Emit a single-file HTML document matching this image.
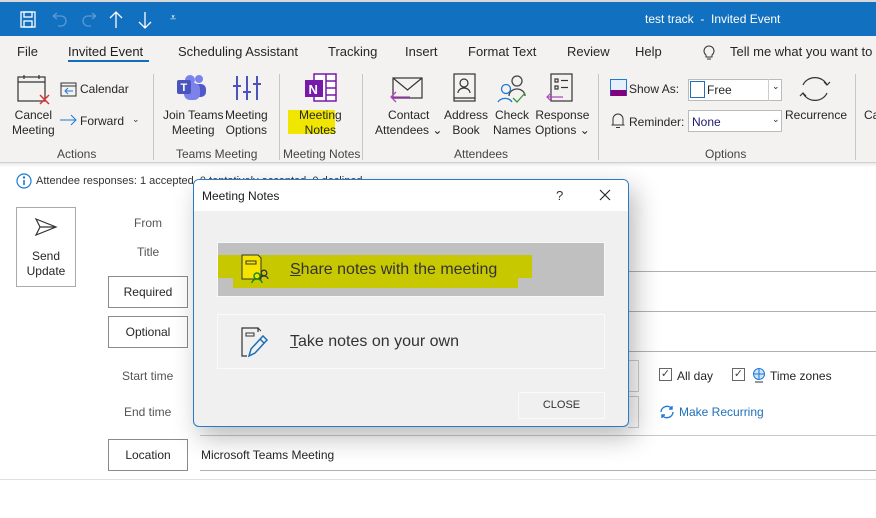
<!DOCTYPE html>
<html><head><meta charset="utf-8"><style>
*{margin:0;padding:0;box-sizing:border-box}
body{width:876px;height:518px;overflow:hidden;background:#fff;font-family:"Liberation Sans",sans-serif;color:#262626;position:relative}
.a{position:absolute;white-space:nowrap}
.t{font-size:12px;color:#262626}
.lbl{font-size:12px;color:#444}
.box{position:absolute;border:1px solid #8a8a8a;background:#fff;font-size:12px;text-align:center;color:#262626}
.sep{position:absolute;width:1px;background:#c8c6c4;top:74px;height:86px}
.hl{position:absolute;height:1px;background:#b0b0b0}
</style></head><body>
<!-- top strip -->
<div class="a" style="left:0;top:0;width:876px;height:2px;background:#d8d8d8"></div>
<!-- title bar -->
<div class="a" style="left:0;top:2px;width:876px;height:34px;background:#1170bf"></div>
<svg class="a" style="left:18px;top:10px" width="140" height="20" viewBox="0 0 140 20" fill="none" stroke="#fff" stroke-width="1.3">
<rect x="3" y="2" width="14" height="15"/><rect x="6" y="2" width="8" height="5"/><rect x="6" y="11" width="8" height="6"/>
<path d="M35 6 h8 a5 5 0 0 1 0 10 h-3 M35 6 l4 -3 M35 6 l4 3" stroke="#5a9ad6"/>
<path d="M78 6 h-8 a5 5 0 0 0 0 10 h3 M78 6 l-4 -3 M78 6 l-4 3" stroke="#5a9ad6"/>
<path d="M98 2 v16 M92 8 l6 -6 l6 6"/>
<path d="M127 2 v16 M121 12 l6 6 l6 -6"/>
</svg>
<div class="a" style="left:170px;top:12px;color:#fff;font-size:11px">&#x2A61;</div>
<div class="a" style="left:645px;top:12px;color:#fff;font-size:12px">test track &nbsp;-&nbsp; Invited Event</div>
<!-- tabs -->
<div class="a" style="left:0;top:36px;width:876px;height:127px;background:#f3f2f1"></div>
<div class="a t" style="top:44px;left:17px;font-size:13px">File</div>
<div class="a t" style="top:44px;left:68px;font-size:13px;color:#1e1e1e">Invited Event</div>
<div class="a" style="left:68px;top:60px;width:81px;height:2px;background:#106ebe"></div>
<div class="a t" style="top:44px;left:178px;font-size:13px">Scheduling Assistant</div>
<div class="a t" style="top:44px;left:328px;font-size:13px">Tracking</div>
<div class="a t" style="top:44px;left:405px;font-size:13px">Insert</div>
<div class="a t" style="top:44px;left:468px;font-size:13px">Format Text</div>
<div class="a t" style="top:44px;left:567px;font-size:13px">Review</div>
<div class="a t" style="top:44px;left:635px;font-size:13px">Help</div>
<svg class="a" style="left:702px;top:43px" width="14" height="18" viewBox="0 0 14 18" fill="none" stroke="#333"><path d="M4 12 a5 5 0 1 1 6 0 v2 h-6z M5 16 h4"/></svg>
<div class="a t" style="top:44px;left:730px;font-size:13px">Tell me what you want to</div>
<!-- ribbon -->
<svg class="a" style="left:17px;top:74px" width="34" height="32" viewBox="0 0 34 32" fill="none" stroke="#333" stroke-width="1.2"><rect x="1" y="3" width="27" height="24"/><path d="M1 8 h27 M7 1 v4 M22 1 v4"/><path d="M23 21 l9 9 M32 21 l-9 9" stroke="#e03030" stroke-width="1.5"/></svg>
<div class="a t" style="left:12px;top:108px;text-align:center;line-height:15px">Cancel<br>Meeting</div>
<svg class="a" style="left:60px;top:81px" width="17" height="16" viewBox="0 0 17 16" fill="none" stroke="#333"><rect x="1" y="2" width="15" height="13"/><path d="M1 5 h15"/><path d="M13 10 h-8 M8 7 l-3 3 l3 3" stroke="#1e7ad6"/></svg>
<div class="a t" style="left:80px;top:82px">Calendar</div>
<svg class="a" style="left:59px;top:113px" width="18" height="14" viewBox="0 0 18 14" fill="none" stroke="#1e7ad6"><path d="M1 7 h16 M12 2 l5 5 l-5 5"/></svg>
<div class="a t" style="left:80px;top:114px">Forward</div>
<div class="a" style="left:132px;top:114px;font-size:9px;color:#333">&#8964;</div>
<div class="a lbl" style="left:57px;top:147px">Actions</div>
<div class="sep" style="left:153px"></div>
<svg class="a" style="left:177px;top:74px" width="30" height="26" viewBox="0 0 30 26"><circle cx="22" cy="5" r="4" fill="#7b83eb"/><rect x="15" y="10" width="14" height="13" rx="5" fill="#5059c9"/><circle cx="13" cy="6" r="5" fill="#7b83eb"/><rect x="7" y="9" width="16" height="17" rx="6" fill="#7b83eb"/><rect x="0" y="6" width="14" height="14" rx="2" fill="#4b53bc"/><text x="3.5" y="17" font-size="11" font-weight="bold" fill="#fff" font-family="Liberation Sans">T</text></svg>
<div class="a t" style="left:163px;top:108px;text-align:center;line-height:15px">Join Teams<br>Meeting</div>
<svg class="a" style="left:233px;top:76px" width="28" height="24" viewBox="0 0 28 24" stroke="#4b53bc" stroke-width="2" fill="none"><path d="M4 0 v24 M14 0 v24 M24 0 v24 M0 10 h8 M10 16 h8 M20 8 h8"/></svg>
<div class="a t" style="left:225px;top:108px;text-align:center;line-height:15px">Meeting<br>Options</div>
<div class="a lbl" style="left:176px;top:147px">Teams Meeting</div>
<div class="sep" style="left:279px"></div>
<svg class="a" style="left:304px;top:73px" width="34" height="30" viewBox="0 0 34 30"><rect x="10" y="1" width="22" height="27" fill="#fff" stroke="#7719aa" stroke-width="1.5"/><path d="M22 8 h10 M22 15 h10 M22 22 h10 M22 1 v27" stroke="#7719aa" stroke-width="1.5"/><rect x="1" y="7" width="18" height="17" fill="#7719aa"/><text x="4.5" y="21" font-size="13" font-weight="bold" fill="#fff" font-family="Liberation Sans">N</text></svg>
<div class="a" style="left:288px;top:110px;width:47px;height:24px;background:#f0e600"></div>
<div class="a t" style="left:299px;top:108px;text-align:center;line-height:15px">Meeting<br>Notes</div>
<div class="a lbl" style="left:283px;top:147px">Meeting Notes</div>
<div class="sep" style="left:362px"></div>
<svg class="a" style="left:390px;top:77px" width="34" height="26" viewBox="0 0 34 26" fill="none" stroke="#333" stroke-width="1.2"><rect x="3" y="1" width="29" height="20"/><path d="M3 1 l14.5 12 l14.5 -12"/><path d="M20 20 h-19 M6 15 l-5 5 l5 5" stroke="#b146c2" stroke-width="1.3"/></svg>
<div class="a t" style="left:375px;top:108px;text-align:center;line-height:15px">Contact<br>Attendees &#8964;</div>
<svg class="a" style="left:453px;top:73px" width="24" height="30" viewBox="0 0 24 30" fill="none" stroke="#333" stroke-width="1.2"><rect x="1" y="1" width="21" height="27"/><path d="M1 25 h21"/><circle cx="11" cy="10" r="4"/><path d="M5 20 a6 5 0 0 1 12 0"/></svg>
<div class="a t" style="left:444px;top:108px;text-align:center;line-height:15px">Address<br>Book</div>
<svg class="a" style="left:496px;top:74px" width="32" height="30" viewBox="0 0 32 30" fill="none" stroke-width="1.3"><circle cx="21" cy="7" r="5" stroke="#444"/><path d="M13 22 a8 7 0 0 1 16 0" stroke="#444"/><circle cx="10" cy="15" r="4.5" stroke="#1e7ad6"/><path d="M2 28 a8 7 0 0 1 14 0" stroke="#1e7ad6"/><path d="M17 24 l4 4 l8 -9" stroke="#3a9a3a"/></svg>
<div class="a t" style="left:493px;top:108px;text-align:center;line-height:15px">Check<br>Names</div>
<svg class="a" style="left:545px;top:73px" width="30" height="30" viewBox="0 0 30 30" fill="none" stroke="#333" stroke-width="1.2"><rect x="6" y="1" width="21" height="27"/><rect x="10" y="6" width="3" height="3"/><path d="M16 7.5 h7"/><rect x="10" y="13" width="3" height="3"/><path d="M16 14.5 h7"/><path d="M18 24 h-16 M6 20 l-4 4 l4 4" stroke="#b146c2"/></svg>
<div class="a t" style="left:535px;top:108px;text-align:center;line-height:15px">Response<br>Options &#8964;</div>
<div class="a lbl" style="left:454px;top:147px">Attendees</div>
<div class="sep" style="left:598px"></div>
<svg class="a" style="left:610px;top:79px" width="17" height="18" viewBox="0 0 17 18"><rect x="0.5" y="0.5" width="16" height="16" fill="#e6f0fa" stroke="#1e7ad6"/><rect x="0.5" y="11" width="16" height="6" fill="#800080"/></svg>
<div class="a t" style="left:629px;top:82px">Show As:</div>
<div class="a" style="left:688px;top:79px;width:94px;height:22px;border:1px solid #bbb;background:#fff"></div>
<div class="a" style="left:690px;top:81px;width:15px;height:17px;border:1px solid #1e6fb8"></div>
<div class="a t" style="left:707px;top:83px">Free</div>
<div class="a" style="left:768px;top:79px;width:1px;height:22px;background:#ccc"></div>
<div class="a" style="left:772px;top:81px;font-size:9px">&#8964;</div>
<svg class="a" style="left:611px;top:111px" width="14" height="18" viewBox="0 0 14 18" fill="none" stroke="#333"><path d="M2 14 v-6 a5 5 0 0 1 10 0 v6 h1.5 h-13 M5 16.5 h4"/></svg>
<div class="a t" style="left:629px;top:115px">Reminder:</div>
<div class="a" style="left:688px;top:110px;width:94px;height:22px;border:1px solid #bbb;background:#fff"></div>
<div class="a t" style="left:692px;top:115px;color:#1b1b6a">None</div>
<div class="a" style="left:772px;top:114px;font-size:9px">&#8964;</div>
<svg class="a" style="left:798px;top:74px" width="34" height="30" viewBox="0 0 34 30" fill="none" stroke="#333" stroke-width="1.2"><path d="M5 11 a13 12 0 0 1 24 0 M29 19 a13 12 0 0 1 -24 0"/><path d="M26 8 l3 3 l3 -3 M2 22 l3 -3 l3 3"/></svg>
<div class="a t" style="left:785px;top:108px">Recurrence</div>
<div class="a lbl" style="left:705px;top:147px">Options</div>
<div class="sep" style="left:855px"></div>
<div class="a t" style="left:864px;top:108px">Ca</div>
<div class="a" style="left:0;top:162px;width:876px;height:1px;background:#d2d0ce"></div>
<div class="a" style="left:0;top:163px;width:876px;height:4px;background:linear-gradient(#e8e8e8,#fff)"></div>
<!-- body -->
<svg class="a" style="left:16px;top:173px" width="16" height="16" viewBox="0 0 16 16" fill="none" stroke="#1e7ad6" stroke-width="1.2"><circle cx="8" cy="8" r="7"/><path d="M8 7 v5" stroke-width="1.6"/><circle cx="8" cy="4.5" r=".6" fill="#1e7ad6"/></svg>
<div class="a" style="left:36px;top:175px;font-size:11px;color:#333">Attendee responses: 1 accepted, 0 tentatively accepted, 0 declined.</div>
<div class="a" style="left:16px;top:207px;width:60px;height:80px;border:1px solid #aaa"></div>
<svg class="a" style="left:34px;top:217px" width="24" height="20" viewBox="0 0 24 20" fill="none" stroke="#333" stroke-width="1.2"><path d="M2 2 l20 8 l-20 8 l4 -8 z M6 10 h16"/></svg>
<div class="a t" style="left:16px;top:249px;width:60px;text-align:center;line-height:15px">Send<br>Update</div>
<div class="a lbl" style="left:134px;top:216px;color:#555">From</div>
<div class="a lbl" style="left:137px;top:245px;color:#555">Title</div>
<div class="box" style="left:108px;top:276px;width:80px;height:32px;line-height:30px">Required</div>
<div class="box" style="left:108px;top:316px;width:80px;height:32px;line-height:30px">Optional</div>
<div class="hl" style="left:628px;top:271px;width:248px"></div>
<div class="hl" style="left:628px;top:311px;width:248px"></div>
<div class="hl" style="left:628px;top:351px;width:248px"></div>
<div class="a lbl" style="left:122px;top:369px;color:#555">Start time</div>
<div class="a lbl" style="left:124px;top:405px;color:#555">End time</div>
<div class="a" style="left:628px;top:360px;width:11px;height:32px;border:1px solid #ccc;border-left:none"></div>
<div class="a" style="left:628px;top:396px;width:11px;height:32px;border:1px solid #ccc;border-left:none"></div>
<div class="a" style="left:659px;top:368px;width:13px;height:13px;border:1px solid #666;font-size:11px;line-height:11px;text-align:center;color:#444">&#10003;</div>
<div class="a t" style="left:677px;top:369px">All day</div>
<div class="a" style="left:732px;top:368px;width:13px;height:13px;border:1px solid #666;font-size:11px;line-height:11px;text-align:center;color:#444">&#10003;</div>
<svg class="a" style="left:752px;top:367px" width="14" height="16" viewBox="0 0 14 16" fill="none" stroke="#1e7ad6"><circle cx="7" cy="7" r="5.5" fill="#cfe4f7"/><path d="M1.5 7 h11 M7 1.5 v11"/><path d="M3 15 h8" stroke="#333"/></svg>
<div class="a t" style="left:770px;top:369px">Time zones</div>
<svg class="a" style="left:659px;top:404px" width="16" height="16" viewBox="0 0 16 16" fill="none" stroke="#1e7ad6" stroke-width="1.4"><path d="M2 8 a6 6 0 0 1 11 -3 M14 8 a6 6 0 0 1 -11 3 M13 2 v3 h-3 M3 14 v-3 h3"/></svg>
<div class="a" style="left:679px;top:405px;font-size:12px;color:#1e6fb8">Make Recurring</div>
<div class="hl" style="left:200px;top:435px;width:676px;background:#c8c8c8"></div>
<div class="box" style="left:108px;top:439px;width:80px;height:32px;line-height:30px">Location</div>
<div class="a t" style="left:201px;top:448px">Microsoft Teams Meeting</div>
<div class="hl" style="left:200px;top:470px;width:676px"></div>
<div class="hl" style="left:0;top:479px;width:876px;background:#e0e0e0"></div>
<!-- dialog -->
<div class="a" style="left:193px;top:179px;width:436px;height:248px;border:1px solid #2b79c9;border-radius:6px;background:#f0f0f0;box-shadow:6px 10px 26px rgba(0,0,0,.28);overflow:hidden">
  <div class="a" style="left:0;top:0;width:434px;height:31px;background:#fff"></div>
  <div class="a" style="left:8px;top:9px;font-size:12px;color:#1a1a1a">Meeting Notes</div>
  <div class="a" style="left:362px;top:8px;font-size:13px;color:#333">?</div>
  <svg class="a" style="left:405px;top:9px" width="12" height="12" viewBox="0 0 12 12" stroke="#222" stroke-width="1.1"><path d="M1 1 l10 10 M11 1 l-10 10"/></svg>
  <div class="a" style="left:23px;top:62px;width:388px;height:55px;background:#c0c0c0;border:1px solid #f8f8f8"></div>
  <div class="a" style="left:24px;top:75px;width:314px;height:23px;background:#c8c800"></div>
  <div class="a" style="left:39px;top:90px;width:285px;height:18px;background:#c8c800"></div>
  <svg class="a" style="left:46px;top:74px" width="30" height="30" viewBox="0 0 30 30"><path d="M2 1 h16 l3 3 v21 h-19z" fill="#f4e400" stroke="#333" stroke-width="1"/><rect x="6" y="7" width="10" height="3" fill="none" stroke="#333"/><circle cx="17" cy="22" r="3" fill="none" stroke="#1e8a1e" stroke-width="1.5"/><path d="M12 29 a5 4 0 0 1 10 0" fill="none" stroke="#1e8a1e" stroke-width="1.5"/><circle cx="24" cy="19" r="2.8" fill="none" stroke="#333" stroke-width="1.3"/><path d="M20 25 a4 3 0 0 1 8 0" fill="none" stroke="#333" stroke-width="1.3"/></svg>
  <div class="a" style="left:96px;top:81px;font-size:16px;color:#333"><u>S</u>hare notes with the meeting</div>
  <div class="a" style="left:23px;top:134px;width:388px;height:55px;background:#f0f0f0;border:1px solid #fafafa"></div>
  <svg class="a" style="left:46px;top:146px" width="32" height="32" viewBox="0 0 32 32" fill="none"><path d="M18 6 v-4 h-16 v28 h5" stroke="#333" stroke-width="1.2"/><path d="M18 2 l3 3" stroke="#333"/><rect x="6" y="7" width="8" height="3" stroke="#333"/><path d="M9 30 l2 -7 l12 -13 l4 4 l-12 13 z" stroke="#1e6fb8" stroke-width="1.5"/><path d="M20 13 l4 4" stroke="#1e6fb8" stroke-width="1.5"/></svg>
  <div class="a" style="left:96px;top:153px;font-size:16px;color:#333"><u>T</u>ake notes on your own</div>
  <div class="a" style="left:324px;top:212px;width:87px;height:27px;border:1px solid #fafafa;font-size:11px;text-align:center;line-height:25px;color:#333">CLOSE</div>
</div>
</body></html>
